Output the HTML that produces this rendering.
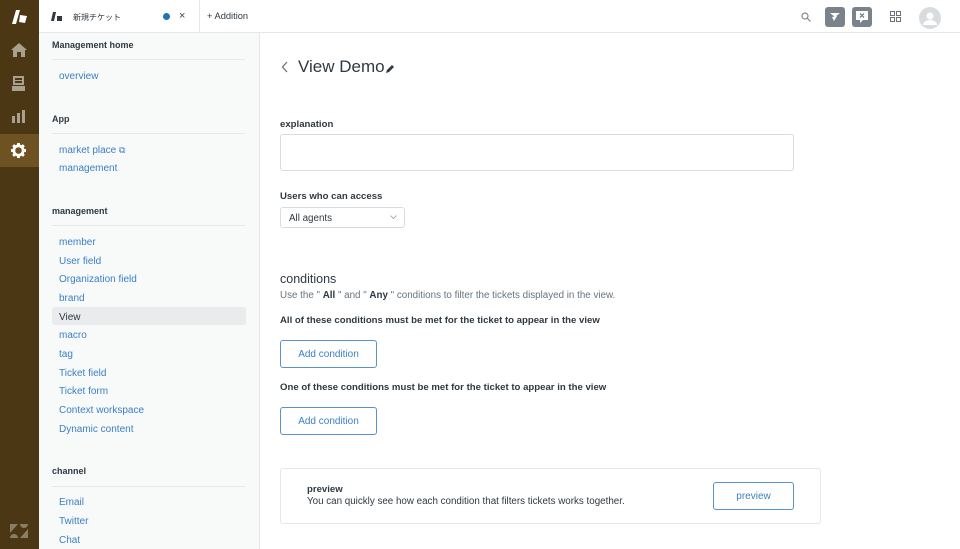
<!DOCTYPE html>
<html><head><meta charset="utf-8"><style>
*{margin:0;padding:0;box-sizing:border-box}
body{width:960px;height:549px;overflow:hidden;background:#fff;font-family:"Liberation Sans","Noto Sans CJK JP",sans-serif;position:relative;color:#2f3941}
.a{position:absolute;white-space:nowrap}
.nav{left:0;top:0;width:39px;height:549px;background:#4b3714}
.side{left:39px;top:33px;width:221px;height:516px;background:#f8f9f9;border-right:1px solid #e4e6e8}
.h{font-size:9px;font-weight:bold;color:#2f3941;left:52px}
.hr{left:52px;width:193px;height:1px;background:#e6e8ea}
.l{font-size:10px;color:#3b7fc4;left:59px}
.btn{border:1px solid #5a93cc;border-radius:3px;color:#3b7fc4;font-size:10px;text-align:center;background:#fff}
</style></head><body>
<div class="a nav"></div>
<div class="a" style="left:0;top:134px;width:39px;height:33px;background:#6f5221"></div>
<svg class="a" style="left:10px;top:9px" width="18" height="16" viewBox="0 0 18 16"><path d="M2 15 L6 1 L10 1 L6 15Z M10 6 L17 7 L15 14 L9 13Z" fill="#fff"/></svg>
<svg class="a" style="left:11px;top:43px" width="16" height="14" viewBox="0 0 16 14"><path d="M8 0 L16 7 L14 7 L14 14 L10 14 L10 9 L6 9 L6 14 L2 14 L2 7 L0 7Z" fill="#a9a08f"/></svg>
<svg class="a" style="left:12px;top:76px" width="13" height="15" viewBox="0 0 13 15"><path d="M1 0H12V9H1Z M3 2V4H10V2Z M3 5V7H10V5Z M0 10H13V15H0Z" fill="#a9a08f" fill-rule="evenodd"/></svg>
<svg class="a" style="left:12px;top:110px" width="13" height="13" viewBox="0 0 13 13"><path d="M0 6H3V13H0Z M5 3H8V13H5Z M10 0H13V13H10Z" fill="#a9a08f"/></svg>
<svg class="a" style="left:11px;top:143px" width="15" height="15" viewBox="0 0 16 16"><circle cx="8" cy="8" r="5" fill="none" stroke="#fff" stroke-width="3"/><g stroke="#fff" stroke-width="3"><path d="M8 0V3M8 13V16M0 8H3M13 8H16M2.3 2.3L4.5 4.5M11.5 11.5L13.7 13.7M2.3 13.7L4.5 11.5M11.5 4.5L13.7 2.3"/></g><circle cx="8" cy="8" r="2" fill="#6f5221"/></svg>
<svg class="a" style="left:10px;top:524px" width="18" height="14" viewBox="0 0 18 14"><path d="M0 0H8L0 9Z M10 0a4 4 0 0 0 8 0Z M0 14a4 4 0 0 1 8 0Z M18 14H10L18 5Z" fill="#8a7e66"/></svg>
<div class="a" style="left:39px;top:0;width:921px;height:33px;border-bottom:1px solid #e4e6e8;background:#fff"></div>
<div class="a" style="left:199px;top:0;width:1px;height:33px;background:#e4e6e8"></div>
<svg class="a" style="left:51px;top:12px" width="11" height="9" viewBox="0 0 11 9"><path d="M0 9L2 0H5L3 9Z M6 4H11V9H6Z" fill="#2f3941"/></svg>
<div class="a" style="left:73px;top:12px;font-size:8px;color:#2f3941">新規チケット</div>
<div class="a" style="left:163px;top:13px;width:7px;height:7px;border-radius:50%;background:#1f73b7"></div>
<div class="a" style="left:179px;top:10px;font-size:11px;color:#444">×</div>
<div class="a" style="left:207px;top:11px;font-size:9.3px;color:#2f3941">+ Addition</div>
<svg class="a" style="left:801px;top:12px" width="10" height="10" viewBox="0 0 10 10"><circle cx="4" cy="4" r="3" fill="none" stroke="#888" stroke-width="1.2"/><path d="M6.3 6.3L9.5 9.5" stroke="#888" stroke-width="1.2"/></svg>
<div class="a" style="left:825px;top:7px;width:20px;height:20px;border-radius:3px;background:#7a838c"></div>
<svg class="a" style="left:829px;top:11px" width="12" height="12" viewBox="0 0 12 12"><path d="M1 2H11L6 6Z M3 6L8 5L5 10Z" fill="#fff"/></svg>
<div class="a" style="left:852px;top:7px;width:20px;height:20px;border-radius:3px;background:#7a838c"></div>
<svg class="a" style="left:855px;top:10px" width="14" height="14" viewBox="0 0 14 14"><path d="M1 1H13V10H8L5 13V10H1Z" fill="#fff"/><path d="M5 3.5L9 7.5M9 3.5L5 7.5" stroke="#7a838c" stroke-width="1.3"/></svg>
<svg class="a" style="left:890px;top:11px" width="11" height="11" viewBox="0 0 11 11"><g fill="none" stroke="#68737d" stroke-width="1"><rect x=".5" y=".5" width="4" height="4"/><rect x="6.5" y=".5" width="4" height="4"/><rect x=".5" y="6.5" width="4" height="4"/><rect x="6.5" y="6.5" width="4" height="4"/></g></svg>
<div class="a" style="left:919px;top:7px;width:22px;height:22px;border-radius:50%;background:#d8dcde;overflow:hidden"><svg width="22" height="22" viewBox="0 0 22 22"><circle cx="11" cy="9" r="3.5" fill="#fff"/><path d="M4 18a7 5 0 0 1 14 0Z" fill="#fff"/></svg></div>
<div class="a side"></div>
<div class="a h" style="top:40px">Management home</div>
<div class="a hr" style="top:59px"></div>
<div class="a l" style="top:71px">overview</div>
<div class="a h" style="top:114px">App</div>
<div class="a hr" style="top:133px"></div>
<div class="a l" style="top:145px">market place <span style="font-size:9px">⧉</span></div>
<div class="a l" style="top:163px">management</div>
<div class="a h" style="top:206px">management</div>
<div class="a hr" style="top:225px"></div>
<div class="a" style="left:52px;top:307px;width:194px;height:18px;background:#e9ebed;border-radius:3px"></div>
<div class="a l" style="top:237px">member</div>
<div class="a l" style="top:256px">User field</div>
<div class="a l" style="top:274px">Organization field</div>
<div class="a l" style="top:293px">brand</div>
<div class="a l" style="top:312px;color:#2f3941">View</div>
<div class="a l" style="top:330px">macro</div>
<div class="a l" style="top:349px">tag</div>
<div class="a l" style="top:368px">Ticket field</div>
<div class="a l" style="top:386px">Ticket form</div>
<div class="a l" style="top:405px">Context workspace</div>
<div class="a l" style="top:424px">Dynamic content</div>
<div class="a h" style="top:466px">channel</div>
<div class="a hr" style="top:486px"></div>
<div class="a l" style="top:497px">Email</div>
<div class="a l" style="top:516px">Twitter</div>
<div class="a l" style="top:535px">Chat</div>
<svg class="a" style="left:281px;top:61px" width="8" height="12" viewBox="0 0 8 12"><path d="M6 1L1.5 6L6 11" fill="none" stroke="#68737d" stroke-width="1.3"/></svg>
<div class="a" style="left:298px;top:57px;font-size:17px;color:#2f3941">View Demo</div>
<svg class="a" style="left:385px;top:64px" width="10" height="10" viewBox="0 0 10 10"><path d="M1 9L2 6L7 1L9 3L4 8Z" fill="#2f3941"/></svg>
<div class="a" style="left:280px;top:119px;font-size:9.6px;font-weight:bold">explanation</div>
<div class="a" style="left:280px;top:134px;width:514px;height:37px;border:1px solid #d8dcde;border-radius:3px"></div>
<div class="a" style="left:280px;top:191px;font-size:9.6px;font-weight:bold">Users who can access</div>
<div class="a" style="left:280px;top:207px;width:125px;height:21px;border:1px solid #d8dcde;border-radius:3px;font-size:9.8px;padding:5px 0 0 8px">All agents</div>
<svg class="a" style="left:390px;top:215px" width="7" height="4" viewBox="0 0 7 4"><path d="M.5 .5L3.5 3.5L6.5 .5" fill="none" stroke="#999" stroke-width=".8"/></svg>
<div class="a" style="left:280px;top:272px;font-size:12.5px">conditions</div>
<div class="a" style="left:280px;top:290px;font-size:9.8px;color:#68737d">Use the " <b style="color:#2f3941">All</b> " and " <b style="color:#2f3941">Any</b> " conditions to filter the tickets displayed in the view.</div>
<div class="a" style="left:280px;top:315px;font-size:9.6px;font-weight:bold">All of these conditions must be met for the ticket to appear in the view</div>
<div class="a btn" style="left:280px;top:340px;width:97px;height:28px;line-height:27px">Add condition</div>
<div class="a" style="left:280px;top:382px;font-size:9.6px;font-weight:bold">One of these conditions must be met for the ticket to appear in the view</div>
<div class="a btn" style="left:280px;top:407px;width:97px;height:28px;line-height:27px">Add condition</div>
<div class="a" style="left:280px;top:468px;width:541px;height:56px;border:1px solid #e4e6e8;border-radius:3px"></div>
<div class="a" style="left:307px;top:484px;font-size:9.6px;font-weight:bold">preview</div>
<div class="a" style="left:307px;top:496px;font-size:9.8px;color:#2f3941">You can quickly see how each condition that filters tickets works together.</div>
<div class="a btn" style="left:713px;top:482px;width:81px;height:28px;line-height:27px">preview</div>
</body></html>
